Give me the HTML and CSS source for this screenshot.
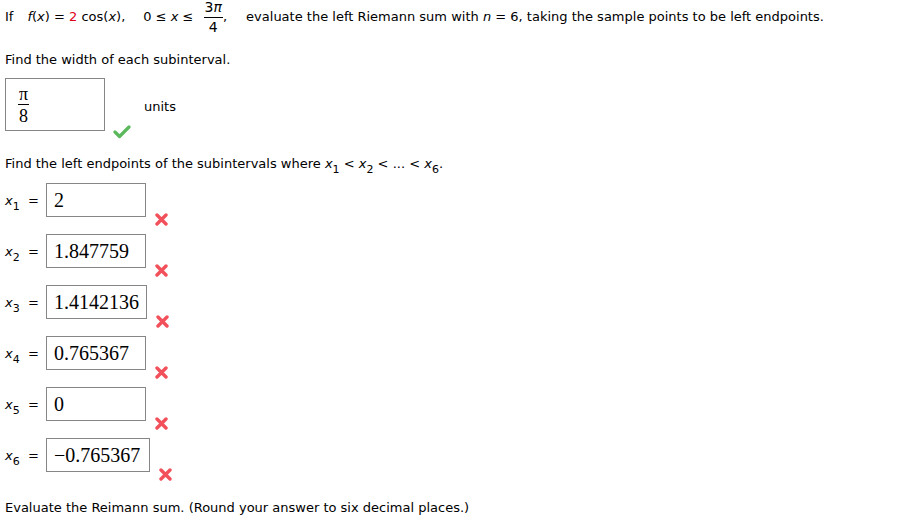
FILE: index.html
```html
<!DOCTYPE html>
<html lang="en">
<head>
    <meta charset="UTF-8">
    <title>Left Riemann Sum</title>
    <link rel="stylesheet" href="styles.css">
</head>
<body>
    <div class="question">
        <p class="intro">
            If<span class="gap"></span><i>f</i>(<i>x</i>) = <span class="red">2</span> cos(<i>x</i>),<span class="gap wide"></span>0 ≤ <i>x</i> ≤
            <span class="frac small"><span class="num">3<i>π</i></span><span class="den">4</span></span>,<span class="gap after"></span>evaluate the left Riemann sum with <i>n</i> = 6, taking the sample points to be left endpoints.
        </p>

        <p class="step">Find the width of each subinterval.</p>
        <div class="width-row">
            <div class="answer tall">
                <span class="frac math"><span class="num">π</span><span class="den">8</span></span>
            </div>
            <svg class="mark" width="18" height="15" viewBox="0 0 18 15">
                <path d="M2 8 L6.5 12.5 L16 3" fill="none" stroke="#5cb85c" stroke-width="3.2" stroke-linecap="round" stroke-linejoin="round"/>
            </svg>
            <span class="units">units</span>
        </div>

        <p class="step second">Find the left endpoints of the subintervals where <i>x</i><sub>1</sub> &lt; <i>x</i><sub>2</sub> &lt; ... &lt; <i>x</i><sub>6</sub>.</p>

        <div class="points">
            <div class="point">
                <span class="var"><i>x</i><sub>1</sub></span><span class="eq">=</span>
                <div class="answer">2</div>
                <svg class="cross" width="13" height="13" viewBox="0 0 13 13"><path d="M2 2 L11 11 M11 2 L2 11" stroke="#f2505a" stroke-width="3.4" stroke-linecap="round"/></svg>
            </div>
            <div class="point">
                <span class="var"><i>x</i><sub>2</sub></span><span class="eq">=</span>
                <div class="answer">1.847759</div>
                <svg class="cross" width="13" height="13" viewBox="0 0 13 13"><path d="M2 2 L11 11 M11 2 L2 11" stroke="#f2505a" stroke-width="3.4" stroke-linecap="round"/></svg>
            </div>
            <div class="point">
                <span class="var"><i>x</i><sub>3</sub></span><span class="eq">=</span>
                <div class="answer">1.4142136</div>
                <svg class="cross" width="13" height="13" viewBox="0 0 13 13"><path d="M2 2 L11 11 M11 2 L2 11" stroke="#f2505a" stroke-width="3.4" stroke-linecap="round"/></svg>
            </div>
            <div class="point">
                <span class="var"><i>x</i><sub>4</sub></span><span class="eq">=</span>
                <div class="answer">0.765367</div>
                <svg class="cross" width="13" height="13" viewBox="0 0 13 13"><path d="M2 2 L11 11 M11 2 L2 11" stroke="#f2505a" stroke-width="3.4" stroke-linecap="round"/></svg>
            </div>
            <div class="point">
                <span class="var"><i>x</i><sub>5</sub></span><span class="eq">=</span>
                <div class="answer">0</div>
                <svg class="cross" width="13" height="13" viewBox="0 0 13 13"><path d="M2 2 L11 11 M11 2 L2 11" stroke="#f2505a" stroke-width="3.4" stroke-linecap="round"/></svg>
            </div>
            <div class="point">
                <span class="var"><i>x</i><sub>6</sub></span><span class="eq">=</span>
                <div class="answer wide">&minus;0.765367</div>
                <svg class="cross" width="13" height="13" viewBox="0 0 13 13"><path d="M2 2 L11 11 M11 2 L2 11" stroke="#f2505a" stroke-width="3.4" stroke-linecap="round"/></svg>
            </div>
        </div>

        <p class="step last">Evaluate the Reimann sum. (Round your answer to six decimal places.)</p>
    </div>
</body>
</html>
```

FILE: styles.css
```css
body {
    margin: 0;
    padding: 0 5px;
    font-family: "DejaVu Sans", Verdana, sans-serif;
    font-size: 13px;
    color: #000;
    background: #fff;
}

p {
    margin: 0;
}

.intro {
    height: 34px;
    line-height: 34px;
}

.gap {
    display: inline-block;
    width: 14px;
}

.gap.wide {
    width: 18px;
}

.gap.after {
    width: 19px;
}

.red {
    color: #e0001b;
}

.frac {
    display: inline-flex;
    flex-direction: column;
    align-items: center;
    vertical-align: middle;
}

.frac .num {
    border-bottom: 1px solid #000;
    padding: 0 1px;
}

.frac.small {
    font-size: 14px;
    line-height: 13px;
    margin-left: 6px;
}

.frac.small .num {
    padding-bottom: 3px;
}

.frac.small .den {
    padding-top: 3px;
}

.step {
    margin-top: 18px;
}

.width-row {
    display: flex;
    align-items: flex-start;
    margin-top: 11px;
}

.answer {
    box-sizing: border-box;
    min-width: 100px;
    height: 34px;
    padding: 0 7px;
    border: 1px solid #868686;
    font-family: "Liberation Serif", "Times New Roman", serif;
    font-size: 20px;
    line-height: 32px;
}

.answer.wide {
    padding-right: 9px;
}

.answer.tall {
    width: 99px;
    height: 53px;
    padding: 8px 12px;
    line-height: normal;
}

.frac.math {
    font-size: 18px;
    line-height: 14px;
}

.frac.math .num {
    padding: 0 1px 3px;
}

.frac.math .den {
    padding-top: 4px;
}

.mark {
    margin: 46px 0 0 8px;
}

.units {
    margin: 21px 0 0 13px;
}

.second {
    margin-top: 17px;
}

.points {
    margin-top: 12px;
}

.point {
    display: flex;
    align-items: flex-start;
    height: 51px;
}

.var {
    width: 23px;
    padding-top: 10px;
}

.eq {
    width: 18px;
    padding-top: 10px;
}

.cross {
    margin: 30px 0 0 9px;
}

sub {
    font-size: 11px;
    vertical-align: -5px;
    line-height: 0;
}

.last {
    margin-top: 11px;
}
```
